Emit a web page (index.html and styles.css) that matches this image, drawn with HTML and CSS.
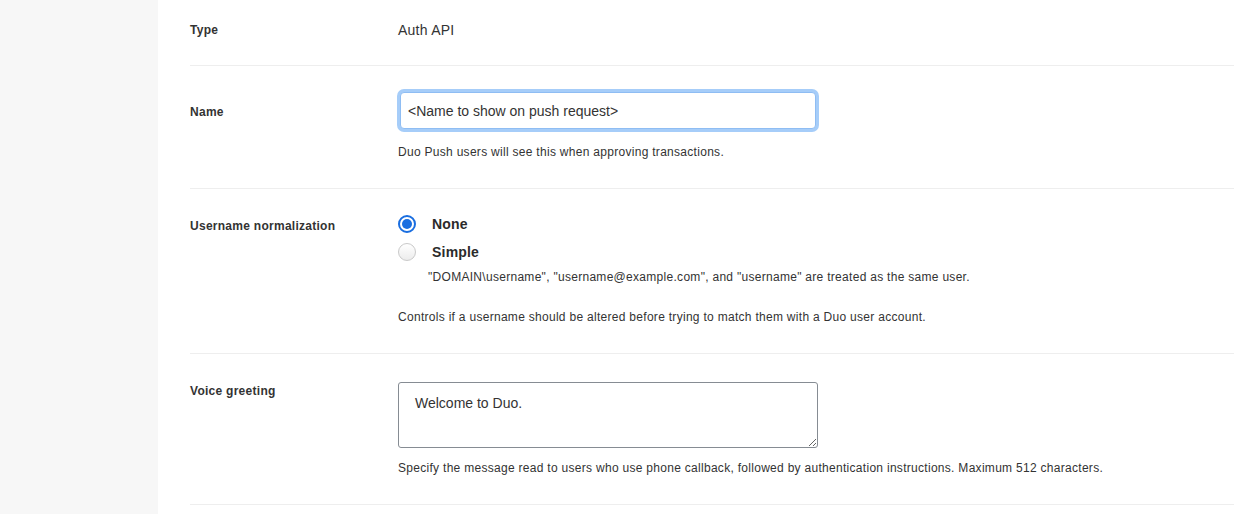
FILE: index.html
```html
<!DOCTYPE html>
<html>
<head>
<meta charset="utf-8">
<link rel="stylesheet" href="styles.css">
</head>
<body>
<div class="page">
  <aside class="sidebar"></aside>
  <main class="main">
    <div class="row row-type">
      <div class="label">Type</div>
      <div class="field"><div class="value">Auth API</div></div>
    </div>
    <div class="row row-name">
      <div class="label">Name</div>
      <div class="field">
        <input class="text-input" type="text" value="&lt;Name to show on push request&gt;">
        <div class="help help-name">Duo Push users will see this when approving transactions.</div>
      </div>
    </div>
    <div class="row row-norm">
      <div class="label">Username normalization</div>
      <div class="field">
        <div class="option"><span class="radio checked"></span><span class="opt-label">None</span></div>
        <div class="option"><span class="radio"></span><span class="opt-label">Simple</span></div>
        <div class="help desc">"DOMAIN\username", "username@example.com", and "username" are treated as the same user.</div>
        <div class="help help-norm">Controls if a username should be altered before trying to match them with a Duo user account.</div>
      </div>
    </div>
    <div class="row row-voice">
      <div class="label">Voice greeting</div>
      <div class="field">
        <textarea class="textarea">Welcome to Duo.</textarea>
        <div class="help help-voice">Specify the message read to users who use phone callback, followed by authentication instructions. Maximum 512 characters.</div>
      </div>
    </div>
  </main>
</div>
</body>
</html>
```
FILE: styles.css
```css
* { box-sizing: border-box; }
html, body { margin: 0; padding: 0; background: #fff; }
body {
  font-family: "Liberation Sans", Arial, sans-serif;
  color: #333;
  width: 1236px;
  height: 514px;
  overflow: hidden;
}
.page { display: flex; height: 514px; }
.sidebar { width: 158px; flex: none; background: #f7f7f7; }
.main { flex: 1; padding-left: 32px; padding-right: 2px; }
.row {
  display: grid;
  grid-template-columns: 208px 1fr;
  border-bottom: 1px solid #eeeeee;
}
.label {
  font-size: 12px;
  font-weight: bold;
  line-height: 16px;
  letter-spacing: 0.27px;
  color: #333;
}
.field { min-width: 0; }
.value { font-size: 14px; line-height: 16px; letter-spacing: 0.25px; color: #333; }
.help { font-size: 12px; line-height: 16px; letter-spacing: 0.29px; color: #333; }

.row-type { padding: 22px 0 27px; }

.row-name { padding: 26px 0 28px; }
.row-name .label { padding-top: 12px; }
.text-input {
  display: block;
  margin-left: 2px;
  width: 416px;
  height: 37px;
  border: 1px solid #8fbdf3;
  box-shadow: 0 0 0 3px #a6cdf9;
  border-radius: 4px;
  padding: 0 7px;
  font-family: "Liberation Sans", Arial, sans-serif;
  font-size: 14px;
  color: #333;
  outline: none;
}
.help-name { margin-top: 15px; }

.row-norm { padding: 21px 0 28px; }
.row-norm .label { padding-top: 8px; }
.option { display: flex; align-items: center; height: 28px; }
.radio {
  width: 18px; height: 18px;
  border-radius: 50%;
  border: 1px solid #c9c9c9;
  background: linear-gradient(#ffffff, #ececec);
  flex: none;
}
.radio.checked {
  border: 2px solid #1a6ee0;
  background: #fff;
  display: flex; align-items: center; justify-content: center;
}
.radio.checked::after {
  content: "";
  width: 10px; height: 10px; border-radius: 50%;
  background: #1a6ee0;
}
.opt-label {
  margin-left: 16px;
  font-size: 14px;
  font-weight: bold;
  letter-spacing: 0.2px;
  color: #2b2b2b;
}
.desc { margin-top: 3px; padding-left: 30px; }
.help-norm { margin-top: 24px; }

.row-voice { padding: 28px 0 28px; }
.row-voice .label { padding-top: 1px; }
.textarea {
  display: block;
  width: 420px;
  height: 66px;
  border: 1px solid #868c93;
  border-radius: 3px;
  padding: 10px 16px;
  font-family: "Liberation Sans", Arial, sans-serif;
  font-size: 14px;
  line-height: 20px;
  color: #333;
  resize: both;
  outline: none;
}
.help-voice { margin-top: 12px; }
```
